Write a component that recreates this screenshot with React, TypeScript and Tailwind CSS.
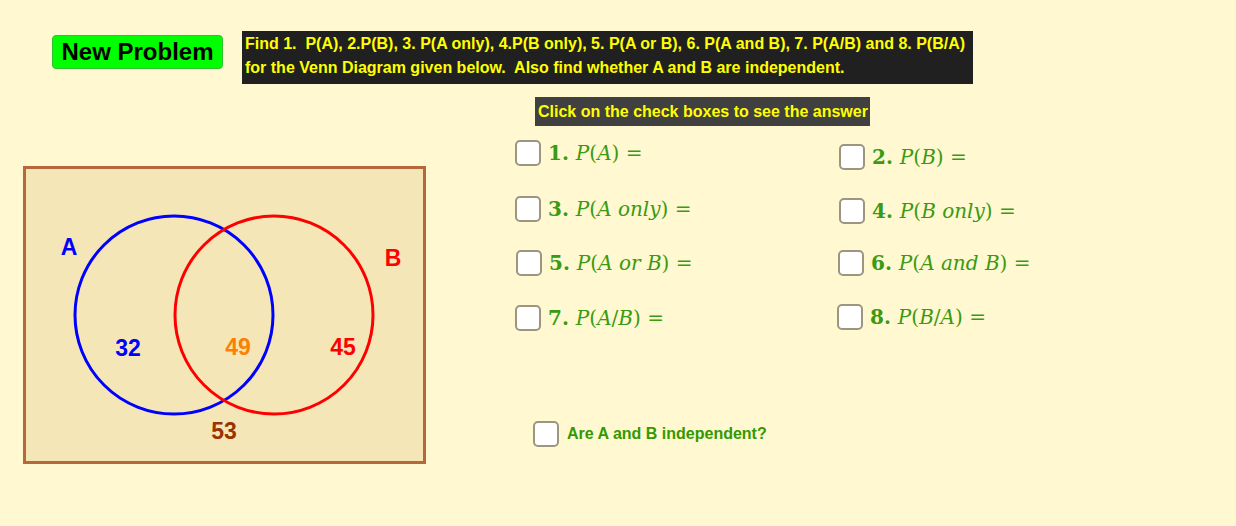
type Part = { t: string; k: "num" | "it" | "up" };

type Item = {
  parts: Part[];
  dx: number;
  dy: number;
};

const math = (n: string, inner: Part[]): Part[] => [
  { t: n + " ", k: "num" },
  { t: "P", k: "it" },
  { t: "(", k: "up" },
  ...inner,
  { t: ")", k: "up" },
  { t: " =", k: "up" },
];

const rows: [Item, Item][] = [
  [
    { parts: math("1.", [{ t: "A", k: "it" }]), dx: 0, dy: 0 },
    { parts: math("2.", [{ t: "B", k: "it" }]), dx: 0, dy: 4 },
  ],
  [
    { parts: math("3.", [{ t: "A only", k: "it" }]), dx: 0, dy: 1 },
    { parts: math("4.", [{ t: "B only", k: "it" }]), dx: 0, dy: 3 },
  ],
  [
    { parts: math("5.", [{ t: "A or B", k: "it" }]), dx: 1, dy: 0 },
    { parts: math("6.", [{ t: "A and B", k: "it" }]), dx: -1, dy: 0 },
  ],
  [
    { parts: math("7.", [{ t: "A", k: "it" }, { t: "/", k: "up" }, { t: "B", k: "it" }]), dx: 0, dy: 0 },
    { parts: math("8.", [{ t: "B", k: "it" }, { t: "/", k: "up" }, { t: "A", k: "it" }]), dx: -2, dy: -1 },
  ],
];

function Box() {
  return (
    <span className="block h-[26px] w-[26px] shrink-0 rounded-[5px] border-2 border-[#9c9680] bg-white" />
  );
}

function MathLine({ item }: { item: Item }) {
  return (
    <div
      className="flex items-center gap-[7px]"
      style={{ marginLeft: item.dx, marginTop: item.dy }}
    >
      <Box />
      <span className="whitespace-pre font-['DejaVu_Serif','Liberation_Serif',serif] text-[20px] leading-none text-[#3a9a12]">
        {item.parts.map((p, i) =>
          p.k === "num" ? (
            <b key={i}>{p.t}</b>
          ) : p.k === "it" ? (
            <i key={i}>{p.t}</i>
          ) : (
            <span key={i}>{p.t}</span>
          ),
        )}
      </span>
    </div>
  );
}

function Venn() {
  return (
    <svg width="403" height="298" viewBox="0 0 403 298" className="block">
      <rect x="1.5" y="1.5" width="400" height="295" fill="#f5e6b8" stroke="#b5693b" strokeWidth="3" />
      <circle cx="151" cy="149" r="99" fill="none" stroke="#0000ff" strokeWidth="3" />
      <circle cx="251" cy="149" r="99" fill="none" stroke="#ff0000" strokeWidth="3" />
      <g
        fontFamily="'Liberation Sans', Arial, sans-serif"
        fontWeight="bold"
        fontSize="23"
        textAnchor="middle"
        dominantBaseline="central"
      >
        <text x="46" y="81" fill="#0000ff">A</text>
        <text x="370" y="92" fill="#ff0000">B</text>
        <text x="105" y="182" fill="#0000ff">32</text>
        <text x="215" y="181" fill="#ff7f00">49</text>
        <text x="320" y="181" fill="#ff0000">45</text>
        <text x="201" y="265" fill="#993300">53</text>
      </g>
    </svg>
  );
}

export default function App() {
  return (
    <div className="h-[526px] w-[1236px] overflow-hidden bg-[#fff8d0] font-['Liberation_Sans',Arial,sans-serif]">
      <header className="flex items-start pt-[31px]">
        <button className="ml-[52px] mt-[4px] h-[34px] w-[171px] rounded-[4px] border border-[#2fc22f] bg-[#00ff00] text-[24px] font-bold leading-none text-black">
          New Problem
        </button>
        <div className="ml-[19px] h-[53px] w-[731px] bg-[#202020] px-[3px] pt-[1px] text-[16px] font-bold leading-[24px] text-[#ffff00] whitespace-pre">
          <div>Find 1.  P(A), 2.P(B), 3. P(A only), 4.P(B only), 5. P(A or B), 6. P(A and B), 7. P(A/B) and 8. P(B/A)</div>
          <div>for the Venn Diagram given below.  Also find whether A and B are independent.</div>
        </div>
      </header>

      <main className="flex items-start">
        <section className="ml-[23px] mt-[82px]">
          <Venn />
        </section>

        <section className="ml-[89px] mt-[13px] flex flex-col">
          <div className="ml-[20px] flex h-[29px] w-[335px] items-center whitespace-nowrap bg-[#404040] px-[3px] text-[16px] font-bold text-[#ffff00]">
            Click on the check boxes to see the answer
          </div>

          <div className="mt-[14px] flex flex-col">
            {rows.map(([a, b], i) => (
              <div key={i} className="grid h-[55px] grid-cols-[324px_1fr] items-start">
                <MathLine item={a} />
                <MathLine item={b} />
              </div>
            ))}
          </div>

          <div className="ml-[18px] mt-[61px] flex items-center gap-[8px]">
            <Box />
            <span className="text-[16px] font-bold text-[#339900]">Are A and B independent?</span>
          </div>
        </section>
      </main>
    </div>
  );
}
